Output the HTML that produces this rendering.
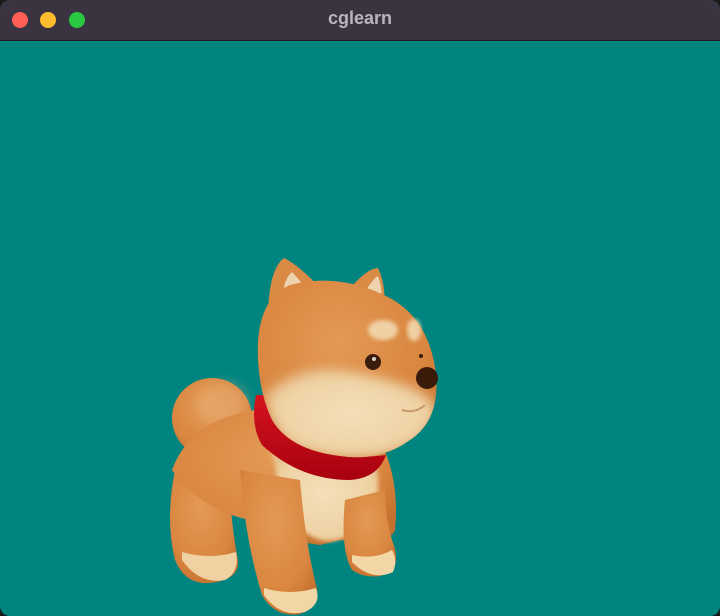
<!DOCTYPE html>
<html><head><meta charset="utf-8"><style>
html,body{margin:0;padding:0;background:#1a1a1a;width:720px;height:616px;overflow:hidden}
.win{position:absolute;left:0;top:0;width:720px;height:616px;border-radius:10px;overflow:hidden;background:#008480}
.tb{position:absolute;left:0;top:0;width:720px;height:40px;background:#3a3440;border-bottom:1px solid #1e1a22}
.tb span{position:absolute;left:0;right:0;top:8px;text-align:center;font:bold 18px "Liberation Sans",sans-serif;color:#b9b4bf}
.d{position:absolute;top:12px;width:16px;height:16px;border-radius:50%}
svg{position:absolute;left:0;top:0}
</style></head><body><div class="win">
<div class="tb"><div class="d" style="left:12px;background:#fe5f57"></div><div class="d" style="left:40px;background:#febc2e"></div><div class="d" style="left:69px;background:#28c840"></div><span>cglearn</span></div>
<svg width="720" height="616" viewBox="0 0 720 616">
<defs>
<radialGradient id="fur" cx="0.45" cy="0.35" r="0.7"><stop offset="0" stop-color="#e39a55"/><stop offset="0.7" stop-color="#d98640"/><stop offset="1" stop-color="#c4702e"/></radialGradient>
<radialGradient id="cream" cx="0.5" cy="0.5" r="0.55"><stop offset="0" stop-color="#f5e0b8"/><stop offset="0.8" stop-color="#eed2a4"/><stop offset="1" stop-color="#e8c08c"/></radialGradient>
<linearGradient id="col" x1="0" y1="0" x2="0" y2="1"><stop offset="0" stop-color="#d4141e"/><stop offset="1" stop-color="#a8000f"/></linearGradient>
<filter id="b" x="-20%" y="-20%" width="140%" height="140%"><feGaussianBlur stdDeviation="6"/></filter>
<filter id="b2"><feGaussianBlur stdDeviation="2"/></filter>
</defs>
<ellipse cx="212" cy="418" rx="40" ry="40" fill="url(#fur)"/>
<ellipse cx="222" cy="405" rx="26" ry="22" fill="#eab27c" opacity="0.5" filter="url(#b)"/>
<path d="M175 470 Q165 520 175 560 Q185 585 210 583 Q240 580 238 560 Q230 520 230 480 Z" fill="url(#fur)"/>
<path d="M182 560 Q200 585 225 580 Q240 572 236 552 Q210 560 182 552 Z" fill="#f0d2a2"/>
<path d="M172 470 Q190 420 255 410 L380 440 Q400 480 395 530 Q390 545 340 540 L320 545 Q280 540 250 520 Q200 510 172 470 Z" fill="url(#fur)"/>
<path d="M270 445 Q300 470 375 460 Q385 500 365 525 Q340 545 320 540 Q290 530 280 490 Z" fill="url(#cream)" filter="url(#b2)"/>
<path d="M345 500 Q340 550 352 570 Q370 582 392 572 Q400 560 392 540 Q385 515 385 490 Z" fill="url(#fur)"/>
<path d="M352 562 Q372 582 393 572 Q398 560 392 550 Q375 560 352 555 Z" fill="#f2d6a6"/>
<path d="M240 470 Q245 540 262 595 Q275 618 300 614 Q322 606 316 585 Q305 540 300 480 Z" fill="url(#fur)"/>
<path d="M264 595 Q280 618 305 612 Q322 604 316 588 Q290 596 264 588 Z" fill="#f2d6a6"/>
<path d="M268 320 Q268 270 284 258 Q300 266 322 290 Z" fill="#d98a45"/>
<path d="M282 308 Q282 280 292 272 Q305 285 310 298 Z" fill="#efd2b0"/>
<path d="M350 288 Q368 268 378 268 Q386 285 384 305 Z" fill="#d98a45"/>
<path d="M366 290 Q374 278 378 276 Q383 290 381 300 Z" fill="#efd2b0"/>
<path d="M256 395 Q250 425 262 445 Q300 480 350 480 Q378 478 386 455 Q340 462 300 440 Q272 420 266 395 Z" fill="url(#col)"/>
<path d="M258 360 Q255 300 290 285 Q340 272 390 298 Q430 320 436 375 Q440 420 410 440 Q380 462 340 456 Q290 450 272 420 Q260 395 258 360 Z" fill="url(#fur)"/>
<clipPath id="hc"><path d="M258 360 Q255 300 290 285 Q340 272 390 298 Q430 320 436 375 Q440 420 410 440 Q380 462 340 456 Q290 450 272 420 Q260 395 258 360 Z"/></clipPath>
<g clip-path="url(#hc)"><path d="M265 395 Q300 362 350 372 Q395 380 420 392 Q445 405 432 425 Q420 450 375 458 Q320 462 290 445 Q268 425 265 395 Z" fill="url(#cream)" filter="url(#b)"/></g>
<ellipse cx="383" cy="330" rx="15" ry="10" fill="#f3d9b0" opacity="0.9" filter="url(#b2)"/>
<ellipse cx="414" cy="330" rx="7" ry="11" fill="#f3d9b0" opacity="0.9" filter="url(#b2)"/>
<circle cx="373" cy="362" r="8" fill="#3a1c0c"/>
<circle cx="374" cy="359" r="2" fill="#fff" opacity="0.8"/>
<circle cx="421" cy="356" r="2" fill="#3a1c0c"/>
<ellipse cx="427" cy="378" rx="11" ry="11" fill="#3b1a0a"/>
<path d="M402 410 Q415 414 425 405" stroke="#c99a70" stroke-width="2" fill="none"/>
</svg>
</div></body></html>
